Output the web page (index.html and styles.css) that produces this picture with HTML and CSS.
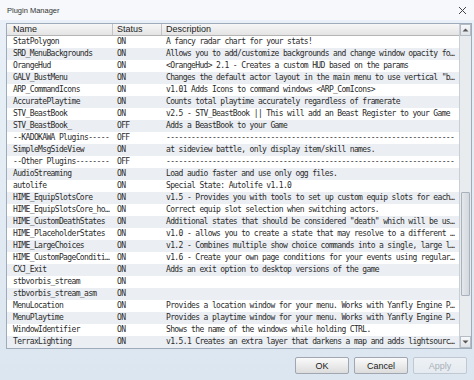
FILE: index.html
```html
<!DOCTYPE html>
<html>
<head>
<meta charset="utf-8">
<link rel="stylesheet" href="styles.css">
</head>
<body>
<div class="window">
  <div class="titlebar">
    <span class="title">Plugin Manager</span>
    <svg class="close" width="9" height="9" viewBox="0 0 9 9"><path d="M1 1L8 8M8 1L1 8" stroke="#444" stroke-width="1"/></svg>
  </div>
  <div class="panel">
    <div class="frame">
      <div class="list">
        <div class="row head">
          <div class="cell name">Name</div>
          <div class="cell status">Status</div>
          <div class="cell desc">Description</div>
        </div>
        <div class="row"><div class="cell name">StatPolygon</div><div class="cell status">ON</div><div class="cell desc">A fancy radar chart for your stats!</div></div>
        <div class="row"><div class="cell name">SRD_MenuBackgrounds</div><div class="cell status">ON</div><div class="cell desc">Allows you to add/customize backgrounds and change window opacity for individual windows.</div></div>
        <div class="row"><div class="cell name">OrangeHud</div><div class="cell status">ON</div><div class="cell desc">&lt;OrangeHud&gt; 2.1 - Creates a custom HUD based on the params</div></div>
        <div class="row"><div class="cell name">GALV_BustMenu</div><div class="cell status">ON</div><div class="cell desc">Changes the default actor layout in the main menu to use vertical "bust" images.</div></div>
        <div class="row"><div class="cell name">ARP_CommandIcons</div><div class="cell status">ON</div><div class="cell desc">v1.01 Adds Icons to command windows &lt;ARP_ComIcons&gt;</div></div>
        <div class="row"><div class="cell name">AccuratePlaytime</div><div class="cell status">ON</div><div class="cell desc">Counts total playtime accurately regardless of framerate</div></div>
        <div class="row"><div class="cell name">STV_BeastBook</div><div class="cell status">ON</div><div class="cell desc">v2.5 - STV_BeastBook || This will add an Beast Register to your Game</div></div>
        <div class="row"><div class="cell name">STV_BeastBook_</div><div class="cell status">OFF</div><div class="cell desc">Adds a BeastBook to your Game</div></div>
        <div class="row"><div class="cell name">--KADOKAWA Plugins-----</div><div class="cell status">OFF</div><div class="cell desc">---------------------------------------------------------------------</div></div>
        <div class="row"><div class="cell name">SimpleMsgSideView</div><div class="cell status">ON</div><div class="cell desc">at sideview battle, only display item/skill names.</div></div>
        <div class="row"><div class="cell name">--Other Plugins--------</div><div class="cell status">OFF</div><div class="cell desc">---------------------------------------------------------------------</div></div>
        <div class="row"><div class="cell name">AudioStreaming</div><div class="cell status">ON</div><div class="cell desc">Load audio faster and use only ogg files.</div></div>
        <div class="row"><div class="cell name">autolife</div><div class="cell status">ON</div><div class="cell desc">Special State: Autolife v1.1.0</div></div>
        <div class="row"><div class="cell name">HIME_EquipSlotsCore</div><div class="cell status">ON</div><div class="cell desc">v1.5 - Provides you with tools to set up custom equip slots for each actor individually</div></div>
        <div class="row"><div class="cell name">HIME_EquipSlotsCore_hotfix</div><div class="cell status">ON</div><div class="cell desc">Correct equip slot selection when switching actors.</div></div>
        <div class="row"><div class="cell name">HIME_CustomDeathStates</div><div class="cell status">ON</div><div class="cell desc">Additional states that should be considered "death" which will be used for checks</div></div>
        <div class="row"><div class="cell name">HIME_PlaceholderStates</div><div class="cell status">ON</div><div class="cell desc">v1.0 - allows you to create a state that may resolve to a different state</div></div>
        <div class="row"><div class="cell name">HIME_LargeChoices</div><div class="cell status">ON</div><div class="cell desc">v1.2 - Combines multiple show choice commands into a single, large list</div></div>
        <div class="row"><div class="cell name">HIME_CustomPageConditions</div><div class="cell status">ON</div><div class="cell desc">v1.6 - Create your own page conditions for your events using regular expressions</div></div>
        <div class="row"><div class="cell name">CXJ_Exit</div><div class="cell status">ON</div><div class="cell desc">Adds an exit option to desktop versions of the game</div></div>
        <div class="row"><div class="cell name">stbvorbis_stream</div><div class="cell status">ON</div><div class="cell desc"></div></div>
        <div class="row"><div class="cell name">stbvorbis_stream_asm</div><div class="cell status">ON</div><div class="cell desc"></div></div>
        <div class="row"><div class="cell name">MenuLocation</div><div class="cell status">ON</div><div class="cell desc">Provides a location window for your menu. Works with Yanfly Engine Plugins</div></div>
        <div class="row"><div class="cell name">MenuPlaytime</div><div class="cell status">ON</div><div class="cell desc">Provides a playtime window for your menu. Works with Yanfly Engine Plugins</div></div>
        <div class="row"><div class="cell name">WindowIdentifier</div><div class="cell status">ON</div><div class="cell desc">Shows the name of the windows while holding CTRL.</div></div>
        <div class="row"><div class="cell name">TerraxLighting</div><div class="cell status">ON</div><div class="cell desc">v1.5.1 Creates an extra layer that darkens a map and adds lightsources!</div></div>
      </div>
      <div class="scrollbar">
        <div class="arrow"><svg width="7" height="4" viewBox="0 0 7 4"><path d="M0.5 3.5L3.5 0.5L6.5 3.5Z" fill="#555"/></svg></div>
        <div class="track"><div class="thumb"></div></div>
        <div class="arrow"><svg width="7" height="4" viewBox="0 0 7 4"><path d="M0.5 0.5L3.5 3.5L6.5 0.5Z" fill="#555"/></svg></div>
      </div>
    </div>
    <div class="buttons">
      <button class="btn">OK</button>
      <button class="btn">Cancel</button>
      <button class="btn disabled">Apply</button>
    </div>
  </div>
</div>
</body>
</html>
```
FILE: styles.css
```css
html, body {
  margin: 0;
  padding: 0;
}
body {
  width: 474px;
  height: 380px;
  overflow: hidden;
  background: #dfe8f2;
}
.window {
  display: flex;
  flex-direction: column;
  height: 380px;
}
.titlebar {
  height: 20px;
  display: flex;
  align-items: center;
  justify-content: space-between;
  padding: 0 7px 0 7px;
  background: #f6f8fb;
}
.title {
  font-family: "Liberation Sans", Arial, sans-serif;
  font-size: 7.5px;
  color: #333;
}
.close {
  display: block;
}
.panel {
  flex: 1;
  display: flex;
  flex-direction: column;
  padding: 3px 2px 0 6px;
  background: linear-gradient(#e9f0f7, #dce6f0);
}
.frame {
  display: flex;
  border: 1px solid #9eabbb;
  background: #fff;
  height: 324px;
}
.list {
  width: 452px;
  display: flex;
  flex-direction: column;
}
.row {
  display: grid;
  grid-template-columns: 106px 49px 297px;
  height: 12px;
  font-family: "DejaVu Sans Mono", monospace;
  font-size: 8px;
  letter-spacing: -0.64px;
  color: #2a2a2a;
  line-height: 12px;
}
.row:nth-child(odd) {
  background: #ebeef2;
}
.row.head {
  background: linear-gradient(#f7f7f7, #e4e4e4);
  font-family: "Liberation Sans", Arial, sans-serif;
  font-size: 9px;
  letter-spacing: 0;
  color: #1c1c1c;
  box-sizing: border-box;
  border-bottom: 1px solid #b5b5b5;
  line-height: 11px;
}
.cell {
  white-space: nowrap;
  overflow: hidden;
  text-overflow: ellipsis;
}
.cell.name {
  padding: 0 3px 0 6px;
}
.cell.status {
  padding: 0 2px 0 4px;
}
.cell.desc {
  padding: 0 2px 0 4px;
}
.head .cell {
  border-right: 1px solid #c4c4c4;
}
.head .cell.desc {
  border-right: none;
}
.scrollbar {
  width: 12px;
  display: flex;
  flex-direction: column;
  background: #e9ecef;
  border-left: 1px solid #c8ced6;
  box-sizing: border-box;
}
.arrow {
  height: 12px;
  display: flex;
  align-items: center;
  justify-content: center;
  background: linear-gradient(#f7f8fa, #dfe2e6);
  border: 1px solid #b4bcc6;
  box-sizing: border-box;
}
.track {
  flex: 1;
  display: flex;
  flex-direction: column;
  align-items: center;
}
.thumb {
  margin-top: 156px;
  width: 9px;
  height: 104px;
  box-sizing: border-box;
  border: 1px solid #a8b1bc;
  border-radius: 1px;
  background: linear-gradient(90deg, #e4e8ec, #d3d8de);
}
.buttons {
  display: flex;
  justify-content: flex-end;
  gap: 5px;
  margin-top: 8px;
  padding-right: 5px;
}
.btn {
  width: 54px;
  height: 17px;
  padding: 0;
  margin: 0;
  font-family: "Liberation Sans", Arial, sans-serif;
  font-size: 9px;
  color: #1a1a1a;
  border: 1px solid #a0a7b0;
  border-radius: 2px;
  background: linear-gradient(#fafafa, #dcdcdc);
}
.btn.disabled {
  color: #a8b0b8;
  border-color: #c0c8d2;
  background: linear-gradient(#eef2f6, #e4eaf0);
}
```
